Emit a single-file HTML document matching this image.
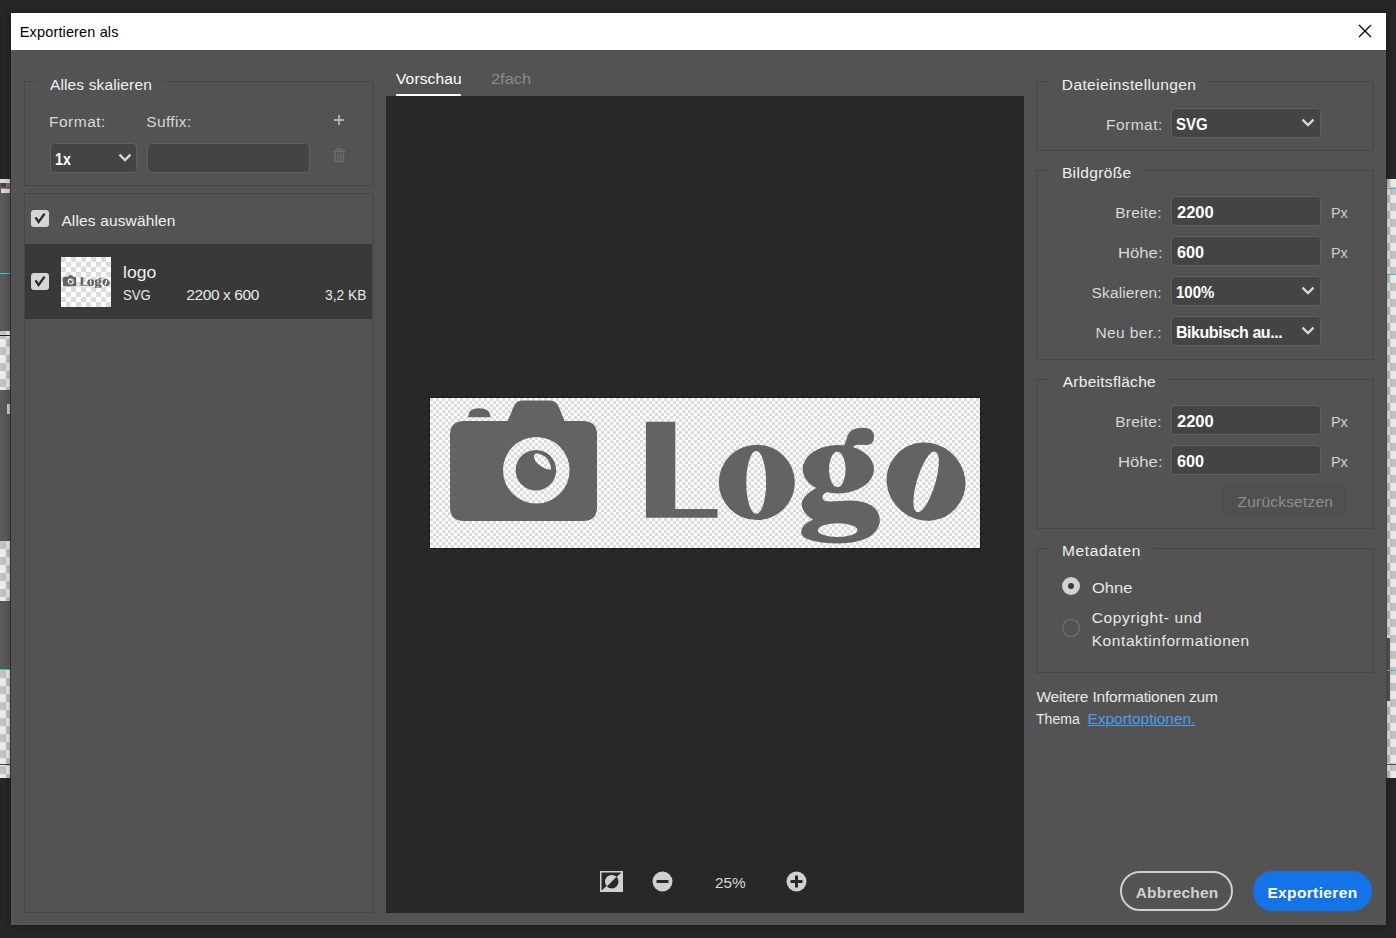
<!DOCTYPE html>
<html><head><meta charset="utf-8">
<style>
*{margin:0;padding:0;box-sizing:border-box}
html,body{width:1396px;height:938px;overflow:hidden;background:#272727;font-family:"Liberation Sans",sans-serif;}
.a{position:absolute}
.fs{position:absolute;border:1px solid #474747}
.lg{position:absolute;color:#f2f2f2;font-size:15.5px;line-height:18px;white-space:nowrap;padding:0 0 0 0;background:#535353}
.lbl{position:absolute;color:#dadada;font-size:15.5px;line-height:18px;white-space:nowrap}
.lblr{position:absolute;color:#dadada;font-size:15.5px;line-height:18px;white-space:nowrap;text-align:right;width:150px}
.inp{position:absolute;background:#444;border:1px solid #606060;border-radius:4px;height:30px}
.gap{position:absolute;height:3px;background:#535353}
.tx{position:absolute;font-family:"Liberation Sans",sans-serif;line-height:20px;white-space:nowrap}
.val{position:absolute;left:5px;top:5px;color:#fff;font-weight:bold;font-size:15px;line-height:18px;white-space:nowrap}
.chev{position:absolute;left:129px;top:9px}
.px{position:absolute;color:#cfcfcf;font-size:15.5px;line-height:18px}
.chk{position:absolute;width:18px;height:17px;background:#d5d5d5;border-radius:3px}
.chk svg{position:absolute;left:0;top:0}
.cb8{background-color:#ececec;background-image:linear-gradient(45deg,#c4c4c4 25%,transparent 25%,transparent 75%,#c4c4c4 75%),linear-gradient(45deg,#c4c4c4 25%,transparent 25%,transparent 75%,#c4c4c4 75%);background-size:16px 16px;background-position:0 0,8px 8px}
.checker{background-color:#fff;background-image:linear-gradient(45deg,#dcdcdc 25%,transparent 25%,transparent 75%,#dcdcdc 75%),linear-gradient(45deg,#dcdcdc 25%,transparent 25%,transparent 75%,#dcdcdc 75%)}
</style></head>
<body>
<svg width="0" height="0" style="position:absolute">
 <defs>
  <symbol id="chev" viewBox="0 0 14 10"><path d="M1.5 1.6L7 7.1L12.5 1.6" fill="none" stroke="#d8d8d8" stroke-width="2.3"/></symbol>
  <symbol id="logo" viewBox="0 0 550 150">
   <g fill="#636363">
    <path fill-rule="evenodd" d="M77.7 23 C80 18 82 12 84.5 7 Q86.5 2.5 93 2.5 L119 2.5 Q125.5 2.5 127.8 7 C130.3 12 132.5 18 134.5 23 L153 23 Q167 23 167 37 L167 109 Q167 123 153 123 L34 123 Q20 123 20 109 L20 37 Q20 23 34 23 L77.7 23Z
     M139.6 72.2 A33.3 33.3 0 1 0 73 72.2 A33.3 33.3 0 1 0 139.6 72.2Z
     M126.2 72.2 A20.3 20.3 0 1 0 85.6 72.2 A20.3 20.3 0 1 0 126.2 72.2Z
     M120.9 71.7 C121.5 62 113 55 106 55.5 C103 56.5 103.5 62 108 66 C112 69.5 116 71.5 120.9 71.7Z"/>
    <path d="M38 19.3 Q38 10.2 49 10.2 Q60.4 10.2 60.4 19.3Z"/>
    <path d="M215.9 23.8H245.3V111.1H287.5V119.7H215.9Z"/>
    <path fill-rule="evenodd" d="M364.9 84.4A38 37.6 0 1 0 288.8 84.4A38 37.6 0 1 0 364.9 84.4Z M336.1 84.4A9.9 31.5 0 1 0 316.3 84.4A9.9 31.5 0 1 0 336.1 84.4Z"/>
    <path fill-rule="evenodd" d="M444 71.2A35.7 24.2 0 1 0 372.6 71.2A35.7 24.2 0 1 0 444 71.2Z M415.6 71.5A8.3 17.7 0 1 0 399 71.5A8.3 17.7 0 1 0 415.6 71.5Z"/>
    <path d="M412 50 Q415.5 46 416.5 41 Q417.5 33 426 30.5 Q434 29 440 31 Q444.5 34 444 40 Q443.5 46.5 437 47 Q430 46.5 425.5 47 Q423 48 423 51Z"/>
    <path fill-rule="evenodd" d="M388 89 Q376 95 372 103 Q370 114 383 121.8 Q372 126 371 134 Q372 145 408 145.4 Q446 145 449.9 124 Q450 103 420 102.4 L400 103.5 Q392 103.5 392.5 99 Q393 95 398 94Z M427.4 132.2A19.75 6.9 0 1 0 387.9 132.2A19.75 6.9 0 1 0 427.4 132.2Z"/>
    <path fill-rule="evenodd" d="M526.64 109.3A40 37.5 40 1 0 465.36 57.9A40 37.5 40 1 0 526.64 109.3Z M505.2 53.75A9 31.5 16.8 1 0 487 114.05A9 31.5 16.8 1 0 505.2 53.75Z"/>
   </g>
  </symbol>
  <symbol id="tick" viewBox="0 0 18 17"><path d="M4.5 7.4L7.6 11.9L13.6 3.6" fill="none" stroke="#2a2a2a" stroke-width="2.35"/></symbol>
 </defs>
</svg>

<!-- canvas strips -->
<div class="a" style="left:0;top:179px;width:11px;height:599px;background:#5a5a5a"></div>
<div class="a" style="left:0;top:179px;width:10px;height:4px;background:#dcdcdc"></div>
<div class="a" style="left:1px;top:183px;width:5px;height:4px;background:#444"></div>
<div class="a" style="left:6px;top:183px;width:4px;height:4px;background:#777"></div>
<div class="a" style="left:0;top:188px;width:10px;height:1px;background:#d06060"></div>
<div class="a" style="left:1px;top:189px;width:9px;height:4px;background:#d8d8d8"></div>
<div class="a" style="left:0;top:273px;width:10px;height:1px;background:#3cc8d0"></div>
<div class="a cb8" style="left:0;top:331px;width:10px;height:59px;background-position:6px 0,14px 8px"></div>
<div class="a" style="left:0;top:335px;width:10px;height:1px;background:#222"></div>
<div class="a" style="left:7px;top:404px;width:3px;height:10px;background:#d0d0d0"></div>
<div class="a cb8" style="left:0;top:541px;width:10px;height:60px;background-position:6px 0,14px 8px"></div>
<div class="a" style="left:0;top:669px;width:10px;height:1px;background:#3cc8d0"></div>
<div class="a cb8" style="left:0;top:670px;width:10px;height:108px;background-position:6px 0,14px 8px"></div>
<div class="a" style="left:0;top:764px;width:10px;height:1px;background:#444"></div>
<div class="a" style="left:10px;top:179px;width:1px;height:599px;background:#3a3a3a"></div>

<div class="a" style="left:1386px;top:179px;width:10px;height:599px;background:#5a5a5a"></div>
<div class="a cb8" style="left:1387px;top:179px;width:9px;height:599px;background-position:3px 0,11px 8px"></div>
<div class="a" style="left:1387px;top:188px;width:9px;height:1px;background:#3cc8d0"></div>
<div class="a" style="left:1387px;top:274px;width:9px;height:1px;background:#3cc8d0"></div>
<div class="a" style="left:1386px;top:638px;width:4px;height:63px;background:#555"></div>
<div class="a" style="left:1387px;top:670px;width:9px;height:1px;background:#3cc8d0"></div>
<div class="a" style="left:1387px;top:764px;width:9px;height:1px;background:#555"></div>

<!-- dialog -->
<div class="a" style="left:11px;top:13px;width:1375px;height:912px;background:#535353;box-shadow:0 0 8px rgba(0,0,0,.4)"></div>
<div class="a" style="left:11px;top:13px;width:1375px;height:37px;background:#fff"></div>
<svg class="a" style="left:1358px;top:24px" width="14" height="14" viewBox="0 0 14 14"><path d="M1 1L13 13M13 1L1 13" stroke="#000" stroke-width="1.3"/></svg>

<!-- LEFT PANEL -->
<div class="fs" style="left:24px;top:81px;width:350px;height:105px"></div>
<svg class="a" style="left:334px;top:115px" width="10" height="10" viewBox="0 0 10 10"><path d="M5 0V10M0 5H10" stroke="#b2b2b2" stroke-width="1.9"/></svg>
<div class="inp" style="left:50px;top:143px;width:87px"><svg class="chev" style="left:67px;top:8.5px" width="14" height="10"><use href="#chev"/></svg></div>
<div class="inp" style="left:147px;top:143px;width:163px"></div>
<svg class="a" style="left:333px;top:148px" width="13" height="15" viewBox="0 0 13 15"><g fill="none" stroke="#6c6c6c" stroke-width="1.6"><path d="M4 2.6V1H8.5V2.6"/><path d="M0.3 3.4H12.2"/><path d="M1.6 4.5L2.4 13.4H10L10.9 4.5"/><path d="M4.9 5.5V12.4M7.6 5.5V12.4"/></g></svg>

<div class="fs" style="left:24px;top:193px;width:350px;height:720px"></div>
<div class="chk" style="left:31px;top:210px"><svg width="18" height="17"><use href="#tick"/></svg></div>
<div class="a" style="left:25px;top:244px;width:347px;height:75px;background:#393939"></div>
<div class="chk" style="left:31px;top:273px"><svg width="18" height="17"><use href="#tick"/></svg></div>
<div class="a checker" id="thumb" style="left:61px;top:257px;width:50px;height:50px;background-size:10px 10px;background-position:5px 0,10px 5px"></div>
<svg class="a" style="left:61px;top:275px" width="50" height="13.6" viewBox="0 0 550 150"><use href="#logo"/></svg>

<!-- CENTER -->
<div class="a" style="left:396px;top:94px;width:65px;height:2.5px;background:#fff;border-radius:1px"></div>
<div class="a" style="left:386px;top:96px;width:638px;height:817px;background:#282828"></div>
<div class="a" style="left:429px;top:397px;width:552px;height:152px;background:#1c1c1c"></div>
<div class="a checker" id="img" style="left:430px;top:398px;width:550px;height:150px;background-size:6px 6px;background-position:3px 0,6px 3px"></div>
<svg class="a" style="left:430px;top:398px" width="550" height="150"><use href="#logo"/></svg>

<!-- zoom toolbar -->
<svg class="a" style="left:600px;top:871px" width="23" height="21" viewBox="0 0 23 21"><rect x="0.75" y="0.75" width="21.5" height="19.5" fill="#282828" stroke="#d0d0d0" stroke-width="1.5"/><path d="M22 1L1 20H22Z" fill="#d0d0d0"/><circle cx="11.7" cy="10.6" r="6.7" fill="#d0d0d0"/><path d="M16.5 5.8A6.7 6.7 0 0 1 6.9 15.4Z" fill="#282828"/></svg>
<svg class="a" style="left:652px;top:871px" width="21" height="21" viewBox="0 0 21 21"><circle cx="10.5" cy="10.5" r="10" fill="#d0d0d0"/><rect x="4.5" y="9" width="12" height="3" fill="#282828"/></svg>
<svg class="a" style="left:786px;top:871px" width="21" height="21" viewBox="0 0 21 21"><circle cx="10.5" cy="10.5" r="10" fill="#d0d0d0"/><rect x="4.5" y="9" width="12" height="3" fill="#282828"/><rect x="9" y="4.5" width="3" height="12" fill="#282828"/></svg>

<!-- RIGHT PANEL -->
<div class="fs" style="left:1036px;top:81px;width:338px;height:70px"></div>
<div class="inp" style="left:1171px;top:108px;width:150px"><svg class="chev" width="14" height="10"><use href="#chev"/></svg></div>

<div class="fs" style="left:1036px;top:170px;width:338px;height:190px"></div>
<div class="inp" style="left:1171px;top:196px;width:150px"></div>
<div class="inp" style="left:1171px;top:236px;width:150px"></div>
<div class="inp" style="left:1171px;top:276px;width:150px"><svg class="chev" width="14" height="10"><use href="#chev"/></svg></div>
<div class="inp" style="left:1171px;top:316px;width:150px"><svg class="chev" width="14" height="10"><use href="#chev"/></svg></div>

<div class="fs" style="left:1036px;top:379px;width:338px;height:150px"></div>
<div class="inp" style="left:1171px;top:405px;width:150px"></div>
<div class="inp" style="left:1171px;top:445px;width:150px"></div>
<div class="a" style="left:1222px;top:486px;width:124px;height:28px;border:1px solid #4d4d4d;background:#505050;border-radius:3px"></div>

<div class="fs" style="left:1036px;top:548px;width:338px;height:125px"></div>
<svg class="a" style="left:1061px;top:576px" width="20" height="20" viewBox="0 0 20 20"><circle cx="10" cy="10" r="9" fill="#d2d2d2"/><circle cx="10" cy="10" r="3" fill="#3a3a3a"/></svg>
<svg class="a" style="left:1061px;top:618px" width="20" height="20" viewBox="0 0 20 20"><circle cx="10" cy="10" r="8.5" fill="none" stroke="#727272" stroke-width="1.1"/></svg>


<!-- buttons -->
<div class="a" style="left:1120px;top:871px;width:113px;height:40px;border:2.7px solid #cfcfcf;border-radius:20px"></div>
<div class="a" style="left:1253px;top:871px;width:119px;height:40px;background:#1473e6;border-radius:20px"></div>
<div class="gap" style="left:37px;top:80px;width:126px"></div>
<div class="gap" style="left:1050px;top:80px;width:158px"></div>
<div class="gap" style="left:1050px;top:169px;width:94px"></div>
<div class="gap" style="left:1050px;top:378px;width:118px"></div>
<div class="gap" style="left:1050px;top:547px;width:103px"></div>
<div class="tx" style="left:19.80px;top:21.70px;font-size:14.5px;font-weight:400;color:#000;letter-spacing:0.14px;">Exportieren als</div>
<div class="tx" style="left:50.00px;top:74.90px;font-size:15.5px;font-weight:400;color:#f0f0f0;letter-spacing:0.13px;">Alles skalieren</div>
<div class="tx" style="left:49.00px;top:112.20px;font-size:15.5px;font-weight:400;color:#d8d8d8;letter-spacing:0.50px;">Format:</div>
<div class="tx" style="left:146.20px;top:112.00px;font-size:15.5px;font-weight:400;color:#d8d8d8;letter-spacing:0.37px;">Suffix:</div>
<div class="tx" style="left:54.81px;top:150.10px;font-size:16px;font-weight:700;color:#fff;transform:scaleX(0.888);transform-origin:0 0;">1x</div>
<div class="tx" style="left:61.40px;top:210.50px;font-size:15.5px;font-weight:400;color:#f0f0f0;letter-spacing:0.14px;">Alles auswählen</div>
<div class="tx" style="left:122.87px;top:263.00px;font-size:17px;font-weight:400;color:#f0f0f0;transform:scaleX(1.032);transform-origin:0 0;">logo</div>
<div class="tx" style="left:123.05px;top:285.10px;font-size:15.5px;font-weight:400;color:#e8e8e8;transform:scaleX(0.848);transform-origin:0 0;">SVG</div>
<div class="tx" style="left:186.20px;top:284.90px;font-size:15.5px;font-weight:400;color:#e8e8e8;letter-spacing:-0.38px;">2200 x 600</div>
<div class="tx" style="left:324.91px;top:284.90px;font-size:15.5px;font-weight:400;color:#e8e8e8;transform:scaleX(0.889);transform-origin:0 0;">3,2 KB</div>
<div class="tx" style="left:396.00px;top:69.00px;font-size:15.5px;font-weight:400;color:#fff;letter-spacing:0.14px;">Vorschau</div>
<div class="tx" style="left:490.54px;top:68.80px;font-size:15.5px;font-weight:400;color:#8a8a8a;transform:scaleX(1.058);transform-origin:0 0;">2fach</div>
<div class="tx" style="left:715.01px;top:873.00px;font-size:15.5px;font-weight:400;color:#d8d8d8;transform:scaleX(0.990);transform-origin:0 0;">25%</div>
<div class="tx" style="left:1061.80px;top:75.00px;font-size:15.5px;font-weight:400;color:#f0f0f0;letter-spacing:0.39px;">Dateieinstellungen</div>
<div class="tx" style="left:1106.00px;top:115.00px;font-size:15.5px;font-weight:400;color:#d8d8d8;letter-spacing:0.47px;">Format:</div>
<div class="tx" style="left:1176.26px;top:115.00px;font-size:16px;font-weight:700;color:#fff;transform:scaleX(0.938);transform-origin:0 0;">SVG</div>
<div class="tx" style="left:1061.90px;top:162.90px;font-size:15.5px;font-weight:400;color:#f0f0f0;letter-spacing:0.36px;">Bildgröße</div>
<div class="tx" style="left:1115.30px;top:203.20px;font-size:15.5px;font-weight:400;color:#d8d8d8;letter-spacing:0.23px;">Breite:</div>
<div class="tx" style="left:1176.90px;top:203.00px;font-size:16px;font-weight:700;color:#fff;transform:scaleX(1.031);transform-origin:0 0;">2200</div>
<div class="tx" style="left:1330.57px;top:203.00px;font-size:15.5px;font-weight:400;color:#d0d0d0;transform:scaleX(0.929);transform-origin:0 0;">Px</div>
<div class="tx" style="left:1117.92px;top:243.10px;font-size:15.5px;font-weight:400;color:#d8d8d8;transform:scaleX(1.077);transform-origin:0 0;">Höhe:</div>
<div class="tx" style="left:1177.20px;top:243.00px;font-size:16px;font-weight:700;color:#fff;transform:scaleX(1.012);transform-origin:0 0;">600</div>
<div class="tx" style="left:1330.57px;top:243.00px;font-size:15.5px;font-weight:400;color:#d0d0d0;transform:scaleX(0.929);transform-origin:0 0;">Px</div>
<div class="tx" style="left:1091.60px;top:283.00px;font-size:15.5px;font-weight:400;color:#d8d8d8;letter-spacing:0.12px;">Skalieren:</div>
<div class="tx" style="left:1175.97px;top:283.00px;font-size:16px;font-weight:700;color:#fff;transform:scaleX(0.935);transform-origin:0 0;">100%</div>
<div class="tx" style="left:1095.50px;top:322.80px;font-size:15.5px;font-weight:400;color:#d8d8d8;letter-spacing:0.40px;">Neu ber.:</div>
<div class="tx" style="left:1175.90px;top:322.80px;font-size:16px;font-weight:700;color:#fff;letter-spacing:-0.44px;">Bikubisch au...</div>
<div class="tx" style="left:1062.70px;top:372.00px;font-size:15.5px;font-weight:400;color:#f0f0f0;letter-spacing:0.28px;">Arbeitsfläche</div>
<div class="tx" style="left:1115.30px;top:412.00px;font-size:15.5px;font-weight:400;color:#d8d8d8;letter-spacing:0.23px;">Breite:</div>
<div class="tx" style="left:1176.90px;top:412.00px;font-size:16px;font-weight:700;color:#fff;transform:scaleX(1.031);transform-origin:0 0;">2200</div>
<div class="tx" style="left:1330.57px;top:412.00px;font-size:15.5px;font-weight:400;color:#d0d0d0;transform:scaleX(0.929);transform-origin:0 0;">Px</div>
<div class="tx" style="left:1117.92px;top:452.00px;font-size:15.5px;font-weight:400;color:#d8d8d8;transform:scaleX(1.077);transform-origin:0 0;">Höhe:</div>
<div class="tx" style="left:1177.20px;top:452.00px;font-size:16px;font-weight:700;color:#fff;transform:scaleX(1.012);transform-origin:0 0;">600</div>
<div class="tx" style="left:1330.57px;top:452.00px;font-size:15.5px;font-weight:400;color:#d0d0d0;transform:scaleX(0.929);transform-origin:0 0;">Px</div>
<div class="tx" style="left:1237.50px;top:491.90px;font-size:15.5px;font-weight:400;color:#8e8e8e;letter-spacing:0.21px;">Zurücksetzen</div>
<div class="tx" style="left:1061.90px;top:540.90px;font-size:15.5px;font-weight:400;color:#f0f0f0;letter-spacing:0.65px;">Metadaten</div>
<div class="tx" style="left:1091.63px;top:577.60px;font-size:15.5px;font-weight:400;color:#e8e8e8;transform:scaleX(1.067);transform-origin:0 0;">Ohne</div>
<div class="tx" style="left:1091.70px;top:608.20px;font-size:15.5px;font-weight:400;color:#e8e8e8;letter-spacing:0.64px;">Copyright- und</div>
<div class="tx" style="left:1091.70px;top:631.40px;font-size:15.5px;font-weight:400;color:#e8e8e8;letter-spacing:0.58px;">Kontaktinformationen</div>
<div class="tx" style="left:1036.40px;top:686.80px;font-size:15.5px;font-weight:400;color:#e8e8e8;letter-spacing:-0.18px;">Weitere Informationen zum</div>
<div class="tx" style="left:1036.40px;top:708.70px;font-size:15.5px;font-weight:400;color:#e8e8e8;transform:scaleX(0.910);transform-origin:0 0;">Thema</div>
<div class="tx" style="left:1087.50px;top:708.70px;font-size:15.5px;font-weight:400;color:#4b9cf0;text-decoration:underline;letter-spacing:-0.05px;">Exportoptionen.</div>
<div class="tx" style="left:1135.70px;top:882.70px;font-size:15.5px;font-weight:700;color:#d0d0d0;letter-spacing:0.20px;">Abbrechen</div>
<div class="tx" style="left:1267.40px;top:882.70px;font-size:15.5px;font-weight:700;color:#fff;letter-spacing:0.36px;">Exportieren</div>
</body></html>
